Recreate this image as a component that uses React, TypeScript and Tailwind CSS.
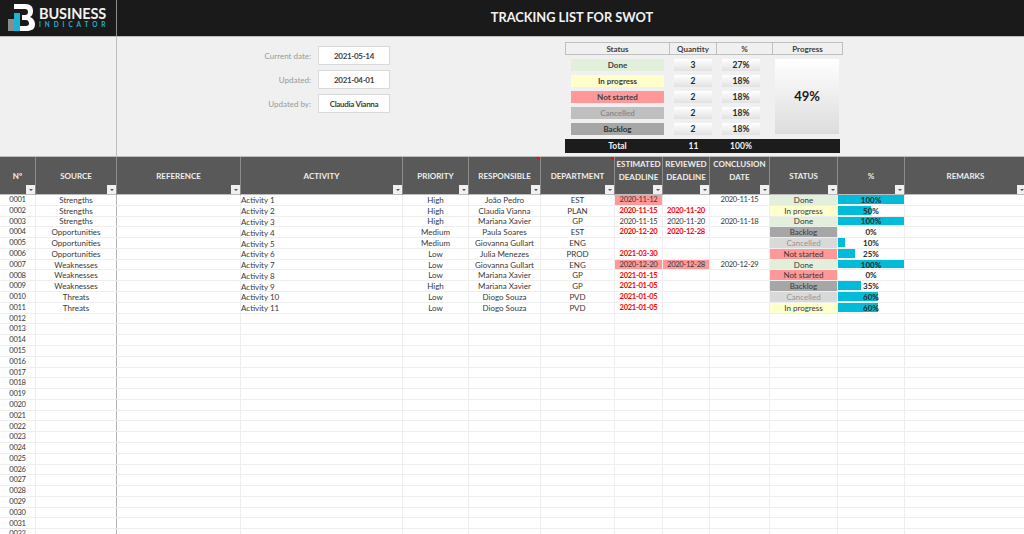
const columns = 'grid grid-cols-[36px_81px_124px_162px_66px_72px_74px_48px_47px_60px_68px_67px_121px]';

const headers: { lines: string[]; note?: boolean }[] = [
  { lines: ['Nº'] },
  { lines: ['SOURCE'] },
  { lines: ['REFERENCE'] },
  { lines: ['ACTIVITY'] },
  { lines: ['PRIORITY'] },
  { lines: ['RESPONSIBLE'], note: true },
  { lines: ['DEPARTMENT'], note: true },
  { lines: ['ESTIMATED', 'DEADLINE'] },
  { lines: ['REVIEWED', 'DEADLINE'] },
  { lines: ['CONCLUSION', 'DATE'] },
  { lines: ['STATUS'] },
  { lines: ['%'] },
  { lines: ['REMARKS'] },
];

type Status = 'Done' | 'In progress' | 'Not started' | 'Cancelled' | 'Backlog';
type DateCell = { value: string; kind: 'plain' | 'late' | 'overdue' } | null;

interface Row {
  source: string;
  activity: string;
  priority: string;
  responsible: string;
  department: string;
  estimated: DateCell;
  reviewed: DateCell;
  conclusion: string;
  status: Status;
  percent: number;
}

const plain = (value: string): DateCell => ({ value, kind: 'plain' });
const late = (value: string): DateCell => ({ value, kind: 'late' });
const overdue = (value: string): DateCell => ({ value, kind: 'overdue' });

const rows: Row[] = [
  { source: 'Strengths', activity: 'Activity 1', priority: 'High', responsible: 'João Pedro', department: 'EST', estimated: overdue('2020-11-12'), reviewed: null, conclusion: '2020-11-15', status: 'Done', percent: 100 },
  { source: 'Strengths', activity: 'Activity 2', priority: 'High', responsible: 'Claudia Vianna', department: 'PLAN', estimated: late('2020-11-15'), reviewed: late('2020-11-20'), conclusion: '', status: 'In progress', percent: 50 },
  { source: 'Strengths', activity: 'Activity 3', priority: 'High', responsible: 'Mariana Xavier', department: 'GP', estimated: plain('2020-11-15'), reviewed: plain('2020-11-20'), conclusion: '2020-11-18', status: 'Done', percent: 100 },
  { source: 'Opportunities', activity: 'Activity 4', priority: 'Medium', responsible: 'Paula Soares', department: 'EST', estimated: late('2020-12-20'), reviewed: late('2020-12-28'), conclusion: '', status: 'Backlog', percent: 0 },
  { source: 'Opportunities', activity: 'Activity 5', priority: 'Medium', responsible: 'Giovanna Gullart', department: 'ENG', estimated: null, reviewed: null, conclusion: '', status: 'Cancelled', percent: 10 },
  { source: 'Opportunities', activity: 'Activity 6', priority: 'Low', responsible: 'Julia Menezes', department: 'PROD', estimated: late('2021-03-30'), reviewed: null, conclusion: '', status: 'Not started', percent: 25 },
  { source: 'Weaknesses', activity: 'Activity 7', priority: 'Low', responsible: 'Giovanna Gullart', department: 'ENG', estimated: overdue('2020-12-20'), reviewed: overdue('2020-12-28'), conclusion: '2020-12-29', status: 'Done', percent: 100 },
  { source: 'Weaknesses', activity: 'Activity 8', priority: 'Low', responsible: 'Mariana Xavier', department: 'GP', estimated: late('2021-01-15'), reviewed: null, conclusion: '', status: 'Not started', percent: 0 },
  { source: 'Weaknesses', activity: 'Activity 9', priority: 'High', responsible: 'Mariana Xavier', department: 'GP', estimated: late('2021-01-05'), reviewed: null, conclusion: '', status: 'Backlog', percent: 35 },
  { source: 'Threats', activity: 'Activity 10', priority: 'Low', responsible: 'Diogo Souza', department: 'PVD', estimated: late('2021-01-05'), reviewed: null, conclusion: '', status: 'Cancelled', percent: 60 },
  { source: 'Threats', activity: 'Activity 11', priority: 'Low', responsible: 'Diogo Souza', department: 'PVD', estimated: late('2021-01-05'), reviewed: null, conclusion: '', status: 'In progress', percent: 60 },
];

const statusCell: Record<Status, string> = {
  Done: 'bg-[#e2efda] text-[#383838]',
  'In progress': 'bg-[#ffffcc] text-[#383838]',
  'Not started': 'bg-[#ff9999] text-[#383838]',
  Cancelled: 'bg-[#d9d9d9] text-[#969696]',
  Backlog: 'bg-[#a6a6a6] text-[#262626]',
};

const summary: { label: Status; chip: string; qty: number; pct: string }[] = [
  { label: 'Done', chip: 'bg-[#e2efda] text-[#404040]', qty: 3, pct: '27%' },
  { label: 'In progress', chip: 'bg-[#ffffcc] text-[#404040]', qty: 2, pct: '18%' },
  { label: 'Not started', chip: 'bg-[#ff9999] text-[#404040]', qty: 2, pct: '18%' },
  { label: 'Cancelled', chip: 'bg-[#bfbfbf] text-[#8c8c8c]', qty: 2, pct: '18%' },
  { label: 'Backlog', chip: 'bg-[#a6a6a6] text-[#303030]', qty: 2, pct: '18%' },
];

const digits = 'text-[7.6px] tracking-[-0.3px]';

function Logo() {
  return (
    <div className="flex items-center h-full pl-[8px]">
      <svg width="28" height="28" viewBox="0 0 28 28" className="shrink-0">
        <rect x="0" y="15" width="6" height="12" fill="#8c8c8c" />
        <rect x="6" y="9" width="6" height="18" fill="#1fb2cf" />
        <path
          d="M6 0 H17 C23 0 25 3 25 7 C25 10 24 12 22 13 C25 14 27 17 27 20 C27 25 24 27 18 27 H12 V22 H18 C20 22 21 21 21 19.5 C21 18 20 16 18 16 H14 V11 H17 C19 11 20 10 20 8 C20 6 19 5 17 5 H6 Z"
          fill="#ffffff"
        />
      </svg>
      <div className="ml-[3px] w-[70px] flex flex-col">
        <span className="text-[14.5px] leading-[14px] font-bold text-[#f2f2f2] tracking-[-0.1px]">BUSINESS</span>
        <span className="text-[6.5px] leading-[8px] font-bold text-[#1fb2cf] tracking-[3.9px] whitespace-nowrap">INDICATOR</span>
      </div>
    </div>
  );
}

function FilterButton() {
  return (
    <span className="absolute right-0 bottom-[1px] w-[9px] h-[9px] bg-[#f0f0f0] flex items-center justify-center">
      <span className="w-0 h-0 border-x-[2px] border-t-[2px] border-x-transparent border-t-[#555555]" />
    </span>
  );
}

function DateValue({ cell }: { cell: DateCell }) {
  if (!cell) return <div className="border-r border-[#eeeeee]" />;
  const tone =
    cell.kind === 'overdue'
      ? 'bg-[#ff9999] text-[#383838]'
      : cell.kind === 'late'
        ? 'text-[#ff0000] font-bold'
        : 'text-[#383838]';
  return <div className={`border-r border-[#eeeeee] flex items-center justify-center ${digits} ${tone}`}>{cell.value}</div>;
}

function TextCell({ children, className = '', strong = false }: { children?: React.ReactNode; className?: string; strong?: boolean }) {
  return (
    <div className={`border-r ${strong ? 'border-[#b5b5b5]' : 'border-[#eeeeee]'} flex items-center justify-center text-[#383838] ${className}`}>
      {children}
    </div>
  );
}

function ProgressCell({ percent }: { percent: number }) {
  return (
    <div className="relative border-r border-[#eeeeee] flex items-center justify-center">
      <div className="absolute left-0 top-0 bottom-[1px] bg-[#00bcd8]" style={{ width: `${percent}%` }} />
      <span className="relative font-bold text-[#262626]">{percent}%</span>
    </div>
  );
}

function TableRow({ index, row }: { index: number; row?: Row }) {
  return (
    <div className={`${columns} h-[10.79px] leading-none border-b border-[#eeeeee] box-border text-[8px]`}>
      <TextCell className={digits}>{String(index).padStart(4, '0')}</TextCell>
      <TextCell strong>{row?.source}</TextCell>
      <TextCell />
      <TextCell className="justify-start pt-[1px]">{row?.activity}</TextCell>
      <TextCell>{row?.priority}</TextCell>
      <TextCell>{row?.responsible}</TextCell>
      <TextCell>{row?.department}</TextCell>
      {row ? <DateValue cell={row.estimated} /> : <TextCell />}
      {row ? <DateValue cell={row.reviewed} /> : <TextCell />}
      <TextCell className={digits}>{row?.conclusion}</TextCell>
      {row ? <TextCell className={statusCell[row.status]}>{row.status}</TextCell> : <TextCell />}
      {row ? <ProgressCell percent={row.percent} /> : <TextCell />}
      <div />
    </div>
  );
}

function DateField({ label, value }: { label: string; value: string }) {
  return (
    <div className="flex items-center h-[19px]">
      <span className="w-[194px] text-right text-[8px] text-[#999999]">{label}</span>
      <span className="ml-[7px] w-[72px] h-full bg-white border border-[#d9d9d9] flex items-center justify-center text-[8px] tracking-[-0.3px] font-bold text-[#404040]">
        {value}
      </span>
    </div>
  );
}

const summaryHeadCell = 'h-[13px] flex items-center justify-center border border-[#bfbfbf] text-[8px] font-bold text-[#404040]';
const softChip = 'h-[12px] w-[38px] flex items-center justify-center bg-linear-to-b from-white to-[#e2e2e2] text-[8.5px] font-bold text-[#262626]';

function Summary() {
  return (
    <div className="ml-[175px] pt-[5px] w-[278px]">
      <div className="grid grid-cols-[105px_47px_56px_70px] grid-rows-[13px_repeat(5,16px)]">
        <div className={summaryHeadCell}>Status</div>
        <div className={`${summaryHeadCell} border-l-0`}>Quantity</div>
        <div className={`${summaryHeadCell} border-l-0`}>%</div>
        <div className={`${summaryHeadCell} border-l-0`}>Progress</div>

        {summary.map((s, i) => (
          <div key={s.label} className="contents">
            <div className="flex items-end pl-[6px]">
              <div className={`h-[12px] w-[93px] flex items-center justify-center text-[8px] font-bold ${s.chip}`}>{s.label}</div>
            </div>
            <div className="flex items-end pl-[4px]">
              <div className={softChip}>{s.qty}</div>
            </div>
            <div className="flex items-end pl-[5px]">
              <div className={softChip}>{s.pct}</div>
            </div>
            {i === 0 && (
              <div className="row-span-5 pt-[4px] pl-[2px] pr-[4px]">
                <div className="h-[75px] bg-linear-to-b from-white to-[#dcdcdc] flex items-center justify-center text-[13px] font-bold text-[#1a1a1a]">
                  49%
                </div>
              </div>
            )}
          </div>
        ))}
      </div>
      <div className="mt-[4px] h-[14px] w-[275px] bg-[#1c1c1c] grid grid-cols-[105px_47px_56px_67px] text-[8.5px] font-bold text-[#f2f2f2]">
        <div className="flex items-center justify-center">Total</div>
        <div className="flex items-center justify-center">11</div>
        <div className="flex items-center justify-center pr-[8px]">100%</div>
        <div />
      </div>
    </div>
  );
}

export default function App() {
  const totalRows = 32;
  return (
    <div className="w-[1024px] h-[534px] overflow-hidden bg-white font-['Lato','Liberation_Sans',sans-serif]">
      <div className="flex h-[37px] bg-[#1a1a1a] border-b border-[#bdbdbd]">
        <div className="w-[117px] border-r border-[#8c8c8c]">
          <Logo />
        </div>
        <div className="flex-1 flex items-center justify-center text-[12.8px] font-bold text-[#f2f2f2] pl-[3px]">
          TRACKING LIST FOR SWOT
        </div>
      </div>

      <div className="flex h-[120px] bg-[#f0f0f0] border-b border-[#bdbdbd]">
        <div className="w-[117px] shrink-0 border-r border-[#bdbdbd]" />
        <div className="pt-[9px] flex flex-col gap-[5px]">
          <DateField label="Current date:" value="2021-05-14" />
          <DateField label="Updated:" value="2021-04-01" />
          <DateField label="Updated by:" value="Claudia Vianna" />
        </div>
        <Summary />
      </div>

      <div className={`${columns} h-[37px] bg-[#595959]`}>
        {headers.map((h, i) => (
          <div
            key={h.lines.join(' ')}
            className={`relative flex flex-col items-center justify-center pt-[1px] text-[8px] leading-[12.5px] font-bold text-[#eeeeee] ${
              i < headers.length - 1 ? 'border-r border-[#8c8c8c]' : ''
            } ${h.lines.length > 1 ? 'pb-[12px]' : ''}`}
          >
            {h.lines.map(line => (
              <span key={line}>{line}</span>
            ))}
            {h.note && <span className="absolute right-0 top-0 w-0 h-0 border-l-[4px] border-t-[4px] border-l-transparent border-t-[#ff0000]" />}
            <FilterButton />
          </div>
        ))}
      </div>
      <div className="h-[1px] bg-[#bdbdbd]" />

      {Array.from({ length: totalRows }, (_, i) => (
        <TableRow key={i} index={i + 1} row={rows[i]} />
      ))}
    </div>
  );
}
